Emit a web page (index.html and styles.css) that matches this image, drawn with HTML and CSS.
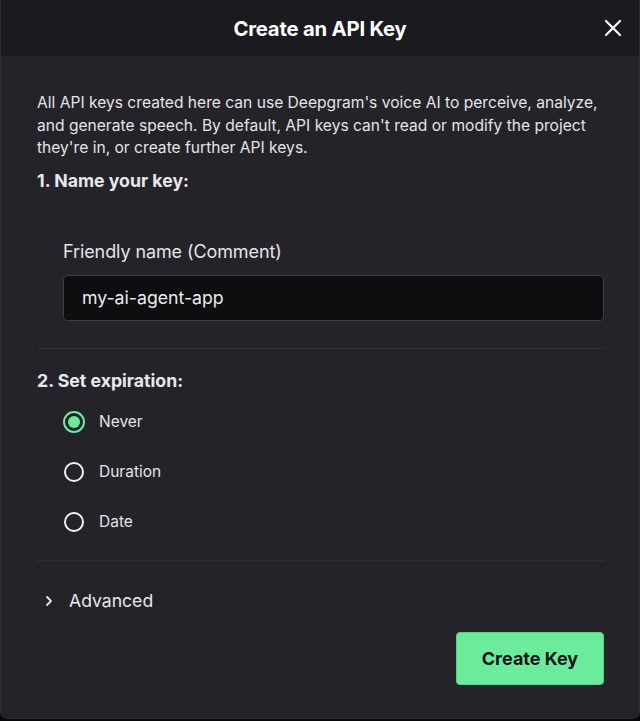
FILE: index.html
```html
<!DOCTYPE html>
<html>
<head>
<meta charset="utf-8">
<link rel="stylesheet" href="styles.css">
</head>
<body>
<div class="modal">
  <header class="modal-header">
    <h1 class="title">Create an API Key</h1>
    <button class="close" aria-label="Close">
      <svg width="18" height="18" viewBox="0 0 18 18"><path d="M2 2 L16 16 M16 2 L2 16" stroke="#ffffff" stroke-width="2.2" stroke-linecap="round"/></svg>
    </button>
  </header>
  <div class="modal-body">
    <p class="intro">All API keys created here can use Deepgram's voice AI to perceive, analyze, and generate speech. By default, API keys can't read or modify the project they're in, or create further API keys.</p>
    <h2 class="section-title first">1. Name your key:</h2>
    <div class="field">
      <label class="field-label">Friendly name (Comment)</label>
      <div class="input">my-ai-agent-app</div>
    </div>
    <div class="divider d1"></div>
    <h2 class="section-title">2. Set expiration:</h2>
    <div class="radios">
      <div class="radio-row"><span class="radio checked"></span><span class="radio-label">Never</span></div>
      <div class="radio-row"><span class="radio"></span><span class="radio-label">Duration</span></div>
      <div class="radio-row"><span class="radio"></span><span class="radio-label">Date</span></div>
    </div>
    <div class="divider d2"></div>
    <div class="advanced">
      <svg class="chev" width="10" height="12" viewBox="0 0 10 12"><path d="M3 2 L7 6 L3 10" fill="none" stroke="#e6e6e8" stroke-width="1.8" stroke-linecap="round" stroke-linejoin="round"/></svg>
      <span>Advanced</span>
    </div>
    <div class="actions">
      <button class="primary">Create Key</button>
    </div>
  </div>
</div>
</body>
</html>
```
FILE: styles.css
```css
* { box-sizing: border-box; }
html, body { margin: 0; padding: 0; background: #0a0a0c; }
body { font-family: Inter, "Noto Sans", sans-serif; color: #e8e8ea; }
.modal {
  width: 640px;
  height: 719px;
  background: #232329;
  border: 1px solid #2f2f35;
  border-top: none;
  border-radius: 0 0 8px 8px;
  overflow: hidden;
  display: flex;
  flex-direction: column;
}
.modal-header {
  height: 56px;
  background: #1b1b1f;
  display: flex;
  align-items: center;
  justify-content: center;
  position: relative;
}
.title {
  margin: 0;
  font-size: 20.3px;
  font-weight: 700;
  color: #ffffff;
  letter-spacing: -0.2px;
}
.close {
  position: absolute;
  right: 17px;
  top: 19px;
  background: none;
  border: none;
  padding: 0;
  width: 18px;
  height: 18px;
  cursor: pointer;
}
.close svg { display: block; }
.modal-body {
  padding: 36px 33px 0 36px;
  display: flex;
  flex-direction: column;
}
.intro {
  margin: 0;
  font-size: 15.6px;
  line-height: 22.5px;
  color: #e4e4e7;
}
.section-title {
  margin: 0;
  font-size: 17.7px;
  line-height: 24px;
  font-weight: 700;
  color: #e8e8ea;
}
.section-title.first { margin-top: 9px; }
.field {
  padding-left: 26px;
  padding-right: 2px;
  margin-top: 47px;
  display: flex;
  flex-direction: column;
}
.field-label {
  font-size: 18px;
  line-height: 24px;
  letter-spacing: -0.1px;
  color: #e4e4e7;
}
.input {
  margin-top: 11px;
  height: 46px;
  background: #0e0e11;
  border: 1px solid #3d3d44;
  border-radius: 4px;
  padding: 0 18px;
  display: flex;
  align-items: center;
  font-size: 17.7px;
  color: #ececee;
}
.divider {
  height: 1px;
  margin-right: 2px;
  background: #2f2f36;
}
.divider.d1 { margin-top: 27px; margin-bottom: 20px; }
.divider.d2 { margin-top: 13px; margin-bottom: 28px; }
.radios {
  margin-top: 4px;
  padding-left: 27px;
  display: flex;
  flex-direction: column;
}
.radio-row {
  height: 50px;
  display: flex;
  align-items: center;
}
.radio {
  width: 20px;
  height: 20px;
  border-radius: 50%;
  border: 2px solid #f2f2f4;
  box-sizing: border-box;
  position: relative;
}
.radio.checked {
  border-color: #6ceb9c;
  width: 22px;
  height: 22px;
  margin-left: -1px;
  margin-right: -1px;
}
.radio.checked::after {
  content: "";
  position: absolute;
  left: 3px;
  top: 3px;
  width: 12px;
  height: 12px;
  border-radius: 50%;
  background: #6ceb9c;
}
.radio-label {
  margin-left: 15px;
  font-size: 15.5px;
  color: #e4e4e7;
}
.advanced {
  display: flex;
  align-items: center;
  height: 24px;
  padding-left: 7px;
  font-size: 17.6px;
  color: #e8e8ea;
}
.chev { margin-right: 15px; }
.actions {
  margin-top: 19px;
  padding-right: 2px;
  display: flex;
  justify-content: flex-end;
}
.primary {
  width: 148px;
  height: 53px;
  background: #6ceb9c;
  border: 1px solid #5ccf88;
  border-radius: 4px;
  font-family: Inter, "Noto Sans", sans-serif;
  font-size: 18px;
  font-weight: 700;
  color: #16161a;
  cursor: pointer;
}
```
